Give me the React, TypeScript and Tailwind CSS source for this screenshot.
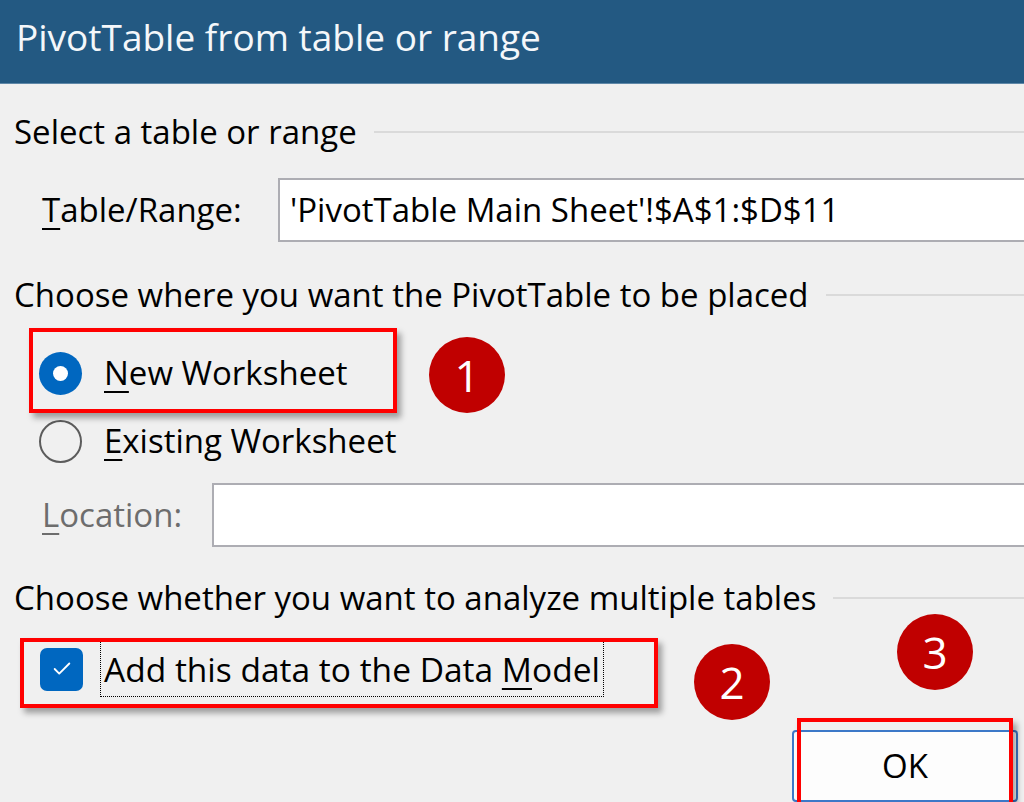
import { Check } from "lucide-react";

const font = { fontFamily: '"Open Sans", "Noto Sans", sans-serif' };

function GroupHeader({ title }: { title: string }) {
  return (
    <div className="flex h-[40px] items-center pl-[14px]">
      <span className="whitespace-nowrap text-[33px] leading-[40px] text-black">{title}</span>
      <div className="ml-[17px] h-[2px] flex-1 bg-[#dadada]" />
    </div>
  );
}

function Key({ children }: { children: string }) {
  return <span className="underline decoration-2 underline-offset-[6px]">{children}</span>;
}

function Badge({ n, className }: { n: string; className: string }) {
  return (
    <div
      className={`absolute grid h-[76px] w-[76px] place-items-center rounded-full bg-[#c00000] text-[44px] leading-none text-white ${className}`}
    >
      {n}
    </div>
  );
}

export default function App() {
  return (
    <div className="relative h-[802px] w-[1024px] overflow-hidden bg-[#f0f0f0]" style={font}>
      <div className="flex h-[84px] items-center border-b border-[#5f88a8] bg-[#235982] pb-[10px] pl-[16px]">
        <span className="text-[37px] leading-none text-[#f4f7fa]">PivotTable from table or range</span>
      </div>

      <div className="pt-[28px]">
        <GroupHeader title="Select a table or range" />

        <div className="mt-[26px] flex h-[64px] items-center">
          <span className="w-[278px] shrink-0 pl-[42px] text-[33px] leading-[40px] text-black">
            <Key>T</Key>able/Range:
          </span>
          <div className="flex h-[64px] flex-1 items-center border-2 border-r-0 border-[#adadb3] bg-white pl-[10px] text-[33px] text-black">
            'PivotTable Main Sheet'!$A$1:$D$11
          </div>
        </div>

        <div className="mt-[33px]">
          <GroupHeader title="Choose where you want the PivotTable to be placed" />
        </div>

        <div className="mt-[24px] flex flex-col">
          <div className="flex h-[68px] items-center pl-[39px]">
            <div className="grid h-[43px] w-[43px] place-items-center rounded-full bg-[#0067c0]">
              <div className="h-[15px] w-[15px] rounded-full bg-white" />
            </div>
            <span className="ml-[22px] text-[33px] leading-[40px] text-black">
              <Key>N</Key>ew Worksheet
            </span>
          </div>
          <div className="flex h-[68px] items-center pl-[39px]">
            <div className="h-[43px] w-[43px] rounded-full border-2 border-[#5c5c5c] bg-[#f0f0f0]" />
            <span className="ml-[22px] text-[33px] leading-[40px] text-black">
              <Key>E</Key>xisting Worksheet
            </span>
          </div>
        </div>

        <div className="mt-[8px] flex h-[64px] items-center">
          <span className="w-[212px] shrink-0 pl-[42px] text-[33px] leading-[40px] text-[#6d6d6d]">
            <Key>L</Key>ocation:
          </span>
          <div className="h-[64px] flex-1 border-2 border-r-0 border-[#adadb3] bg-white" />
        </div>

        <div className="mt-[31px]">
          <GroupHeader title="Choose whether you want to analyze multiple tables" />
        </div>

        <div className="mt-[22px] flex h-[58px] items-center pl-[40px]">
          <div className="grid h-[43px] w-[43px] place-items-center rounded-[7px] bg-[#0067c0]">
            <Check size={22} strokeWidth={2} className="text-white" />
          </div>
          <span className="ml-[17px] border border-dotted border-black px-[3px] text-[33.5px] leading-[54px] text-black">
            Add this data to the Data <Key>M</Key>odel
          </span>
        </div>

        <div className="mt-[32px] flex pl-[792px]">
          <div className="grid h-[72px] w-[226px] place-items-center rounded-[4px] border-2 border-[#3c78c8] bg-[#fdfdfd] text-[33px] text-black">
            OK
          </div>
        </div>
      </div>

      <div className="pointer-events-none absolute left-[29px] top-[328px] h-[85px] w-[368px] border-4 border-[#ff0000] shadow-[4px_5px_6px_rgba(0,0,0,0.35)]" />
      <div className="pointer-events-none absolute left-[20px] top-[638px] h-[70px] w-[638px] border-4 border-[#ff0000] shadow-[4px_5px_6px_rgba(0,0,0,0.35)]" />
      <div className="pointer-events-none absolute left-[797px] top-[718px] h-[90px] w-[216px] border-4 border-[#ff0000] shadow-[4px_5px_6px_rgba(0,0,0,0.35)]" />

      <Badge n="1" className="left-[429px] top-[337px]" />
      <Badge n="2" className="left-[694px] top-[644px]" />
      <Badge n="3" className="left-[897px] top-[614px]" />
    </div>
  );
}
